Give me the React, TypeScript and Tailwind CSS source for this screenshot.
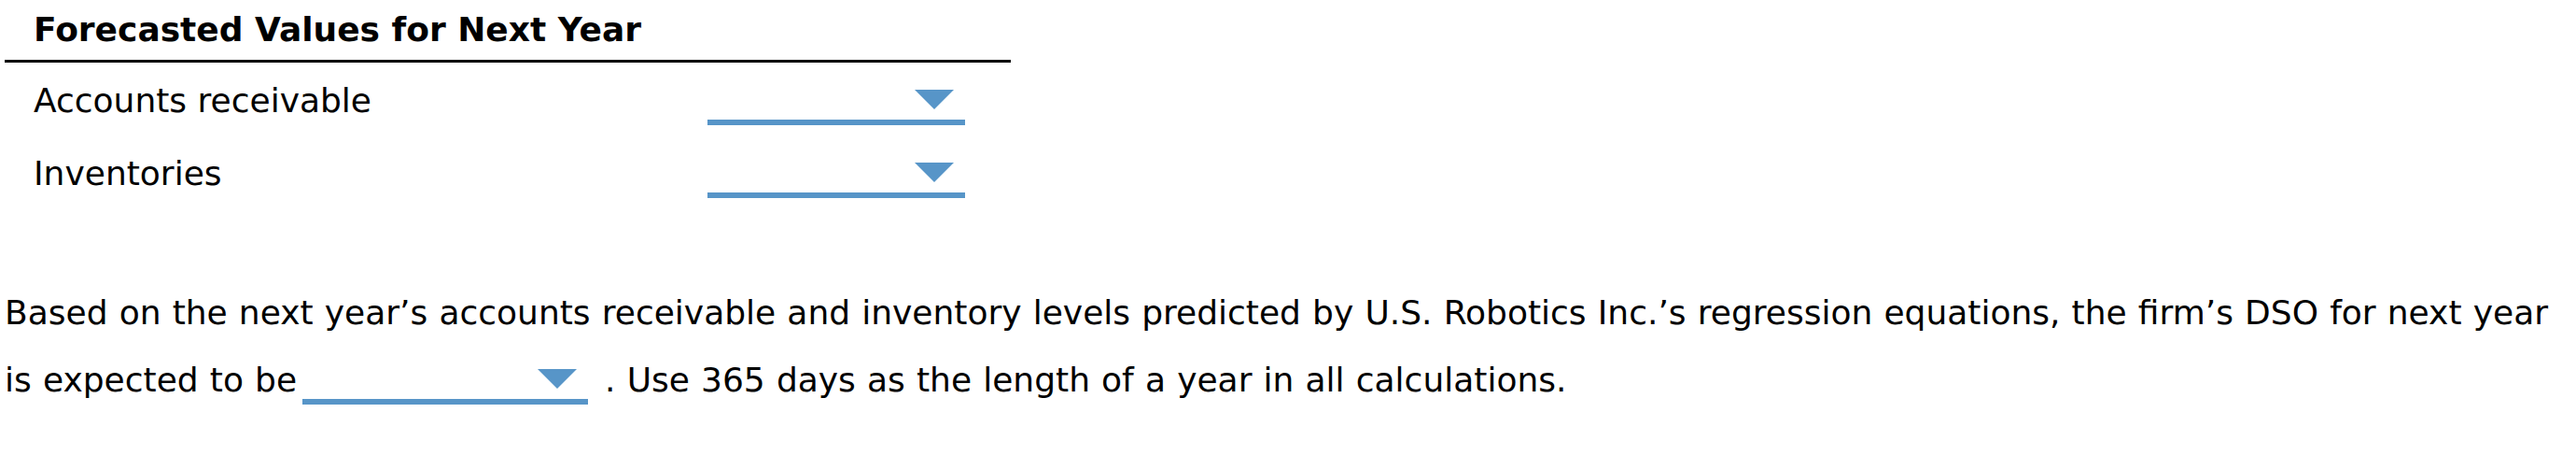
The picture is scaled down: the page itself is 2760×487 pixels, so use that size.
import React from 'react';

const Caret = ({ className = '' }: { className?: string }) => (
  <svg width="42" height="21" viewBox="0 0 42 21" className={className}>
    <polygon points="0,0 42,0 21,21" fill="#5795c8" />
  </svg>
);

// Table dropdown: blue underline with a caret on the right
const Blank = () => (
  <div className="relative w-[276px] h-[43px] border-b-[6px] border-[#5795c8] mt-[24px]">
    <Caret className="absolute right-[12px] top-[5px]" />
  </div>
);

// Same dropdown sitting inside a sentence
const InlineBlank = () => (
  <span className="relative inline-block align-[-14px] w-[306px] h-[43px] border-b-[6px] border-[#5795c8] ml-[6px] mr-[18px]">
    <Caret className="absolute right-[12px] top-[5px]" />
  </span>
);

const rows = ['Accounts receivable', 'Inventories'];

export default function App() {
  return (
    <div className="bg-white w-[2760px] h-[487px] pl-[5px] text-black font-['DejaVu_Sans',_Verdana,_sans-serif] text-[36px]">
      <div className="w-[1078px]">
        <div className="pt-[10px] pb-[10px] pl-[31px] leading-[44px] font-bold border-b-[3px] border-black">
          Forecasted Values for Next Year
        </div>
        {rows.map((label) => (
          <div key={label} className="flex items-start h-[78px]">
            <div className="w-[753px] pl-[31px] mt-[19px] leading-[44px]">{label}</div>
            <Blank />
          </div>
        ))}
      </div>
      <p className="mt-[76px] leading-[72px] [word-spacing:0.7px]">
        Based on the next year’s accounts receivable and inventory levels predicted by U.S. Robotics Inc.’s regression
        equations, the firm’s DSO for next year is expected to be
        <InlineBlank />
        . Use 365 days as the length of a year in all calculations.
      </p>
    </div>
  );
}
